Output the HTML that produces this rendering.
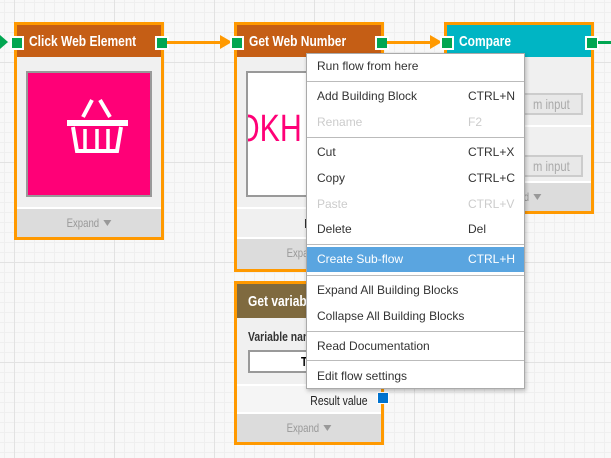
<!DOCTYPE html>
<html><head><style>
body{margin:0;width:611px;height:458px;overflow:hidden;position:relative;font-family:"Liberation Sans",sans-serif;
background-color:#f8f8f8;
background-image:linear-gradient(#e2e2e2 1px,transparent 1px),linear-gradient(90deg,#e2e2e2 1px,transparent 1px),linear-gradient(#efefef 1px,transparent 1px),linear-gradient(90deg,#efefef 1px,transparent 1px);
background-size:100px 100px,100px 100px,10px 10px,10px 10px;
background-position:0 62px,14px 0,0 2px,4px 0;}
.c{display:inline-block;transform:scaleX(.8);transform-origin:left center;white-space:nowrap}
.cc{display:inline-block;transform:scaleX(.8);transform-origin:center center;white-space:nowrap}
.cr{display:inline-block;transform:scaleX(.8);transform-origin:right center;white-space:nowrap}
.blk{position:absolute;border:3px solid #ff9900;background:#f0f0f0;box-sizing:border-box}
.hd{height:32px;color:#fff;font-weight:bold;font-size:15px;line-height:34px;padding-left:11px}
.ft{position:absolute;left:0;right:0;bottom:0;height:28px;background:#dcdcdc;border-top:2px solid #fff;color:#999;font-size:12px;text-align:center;line-height:28px}
.ft .cc:after{content:"";display:inline-block;margin-left:5px;border-left:5px solid transparent;border-right:5px solid transparent;border-top:6px solid #999;vertical-align:1px}
.pt{position:absolute;width:10px;height:10px;background:#00a651;border:2px solid #fff}
.ln{position:absolute;height:3px;background:#ff9900}
.ar{position:absolute;width:0;height:0;border-top:7px solid transparent;border-bottom:7px solid transparent;border-left:12px solid #ff9900}
.img{position:absolute;border:2px solid #999;box-sizing:border-box}
.menu{position:absolute;left:306px;top:53px;width:219px;height:336px;background:#fff;border:1px solid #aaa;box-sizing:border-box;box-shadow:1px 2px 4px rgba(0,0,0,.25);font-size:12px;color:#333}
.it{position:absolute;left:0;right:0;height:25px;line-height:25px;padding-left:10px}
.it span{position:absolute;left:161px}
.dis{color:#ccc}
.sep{position:absolute;left:0;right:0;border-top:1px solid #bbb}
.inp{position:absolute;border:2px solid #ccc;background:#e8e8e8;color:#aaa;font-size:14px;height:22px;box-sizing:border-box;line-height:18px}
</style></head><body>
<div class="ar" style="left:0;top:35px;border-left-color:#00a651;border-left-width:8px"></div>

<div class="blk" style="left:14px;top:22px;width:150px;height:218px">
<div class="hd" style="background:#c55e15;padding-left:12px"><span class="c">Click Web Element</span></div>
<div class="img" style="left:9px;top:46px;width:126px;height:126px;background:#ff0077">
<svg width="122" height="122" viewBox="0 0 122 122"><g fill="none" stroke="#fff" stroke-width="4"><path d="M55 44 L64 27 M72 27 L82 44"/><path d="M39 50 H100" stroke-width="6"/><path d="M45 54 L49 78 H89 L93 54"/><path d="M57 56 V76 M69 56 V76 M80 56 V76" stroke-width="3.5"/></g></svg></div>
<div class="ft"><span class="cc">Expand</span></div>
</div>
<div class="pt" style="left:10px;top:36px"></div>
<div class="pt" style="left:155px;top:36px"></div>
<div class="ln" style="left:167px;top:41px;width:56px"></div>
<div class="ar" style="left:220px;top:35px"></div>

<div class="blk" style="left:234px;top:22px;width:150px;height:250px">
<div class="hd" style="background:#c55e15;padding-left:12px"><span class="c">Get Web Number</span></div>
<div class="img" style="left:9px;top:46px;width:126px;height:126px;background:#fff;overflow:hidden"><div style="position:absolute;left:-12px;top:36px;color:#ff0077;font-size:38px;line-height:40px"><span class="c">OKH</span></div></div>
<div style="position:absolute;left:0;right:0;top:182px;border-top:2px solid #fff;height:30px;line-height:30px;font-size:13px;padding-left:67px;color:#222">N</div>
<div class="ft" style="height:30px"><span class="cc">Expand</span></div>
</div>
<div class="pt" style="left:230px;top:36px"></div>
<div class="pt" style="left:375px;top:36px"></div>
<div class="ln" style="left:387px;top:41px;width:46px"></div>
<div class="ar" style="left:430px;top:35px"></div>

<div class="blk" style="left:444px;top:22px;width:150px;height:192px">
<div class="hd" style="background:#00b5c4;padding-left:12px"><span class="c">Compare</span></div>
<div style="position:absolute;left:0;right:0;top:100px;border-top:2px solid #fff"></div>
<div class="inp" style="left:50px;top:68px;width:86px;padding-left:34px"><span class="c">m input</span></div>
<div class="inp" style="left:50px;top:130px;width:86px;padding-left:34px"><span class="c">m input</span></div>
<div class="ft"><span class="cc">Expand</span></div>
</div>
<div class="pt" style="left:440px;top:36px"></div>
<div class="pt" style="left:585px;top:36px"></div>
<div class="ln" style="left:598px;top:41px;width:13px;background:#00a651"></div>

<div class="blk" style="left:234px;top:281px;width:150px;height:164px">
<div class="hd" style="background:#7f6a3f;height:34px;line-height:36px;padding-left:11px"><span class="c">Get variable</span></div>
<div style="position:absolute;left:11px;top:45px;font-size:13px;font-weight:bold;color:#333"><span class="c">Variable name</span></div>
<div style="position:absolute;left:11px;top:66px;width:130px;height:23px;background:#fff;border:2px solid #999;box-sizing:border-box;font-size:13px;font-weight:bold;text-align:center;line-height:19px"><span class="cc">Total</span></div>
<div style="position:absolute;left:0;right:0;top:100px;height:32px;border-top:2px solid #fff;background:#f5f5f5;font-size:13px;text-align:right;padding-right:13px;line-height:30px;color:#222"><span class="cr">Result value</span></div>
<div class="ft"><span class="cc">Expand</span></div>
</div>
<div style="position:absolute;left:377px;top:392px;width:10px;height:10px;background:#0073cf;border:1px solid #fff"></div>

<div class="menu">
<div class="it" style="top:0">Run flow from here</div>
<div class="sep" style="top:27px"></div>
<div class="it" style="top:30px">Add Building Block<span>CTRL+N</span></div>
<div class="it dis" style="top:56px">Rename<span>F2</span></div>
<div class="sep" style="top:83px"></div>
<div class="it" style="top:86px">Cut<span>CTRL+X</span></div>
<div class="it" style="top:112px">Copy<span>CTRL+C</span></div>
<div class="it dis" style="top:138px">Paste<span>CTRL+V</span></div>
<div class="it" style="top:163px">Delete<span>Del</span></div>
<div class="sep" style="top:190px"></div>
<div class="it" style="top:193px;background:#5aa5e0;color:#fff">Create Sub-flow<span>CTRL+H</span></div>
<div class="sep" style="top:221px"></div>
<div class="it" style="top:224px">Expand All Building Blocks</div>
<div class="it" style="top:250px">Collapse All Building Blocks</div>
<div class="sep" style="top:277px"></div>
<div class="it" style="top:280px">Read Documentation</div>
<div class="sep" style="top:306px"></div>
<div class="it" style="top:310px">Edit flow settings</div>
</div>
</body></html>
